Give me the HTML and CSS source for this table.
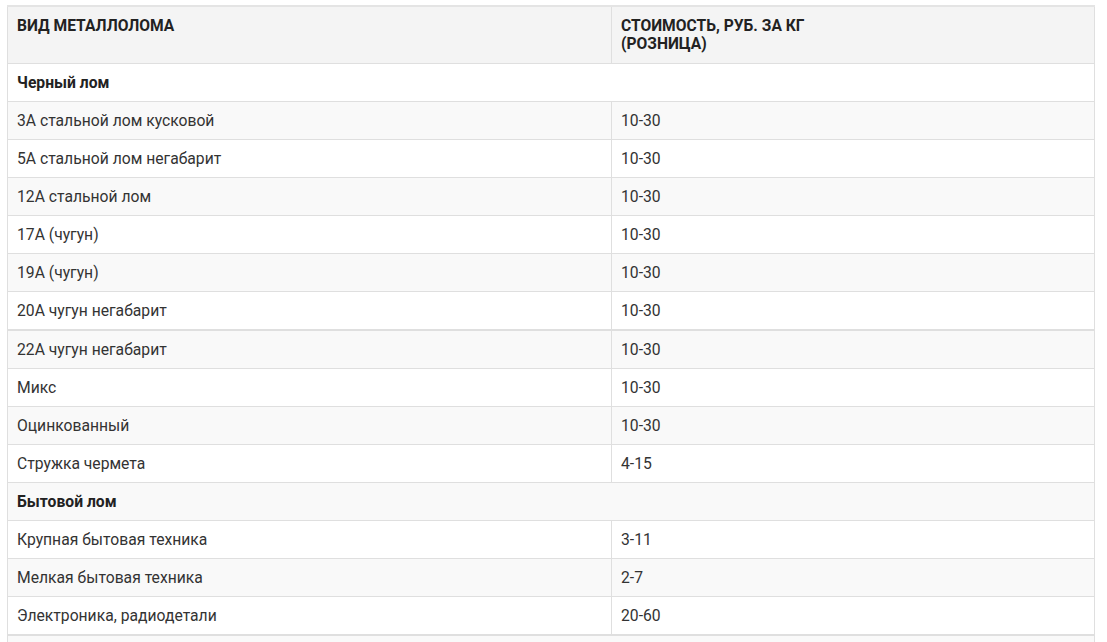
FILE: index.html
```html
<!DOCTYPE html>
<html lang="ru">
<head>
<meta charset="utf-8">
<title>Цены на металлолом</title>
<link rel="stylesheet" href="styles.css">
</head>
<body>
<div class="wrap">
<table class="price">
  <colgroup><col class="c1"><col class="c2"></colgroup>
  <thead>
    <tr><th>Вид металлолома</th><th>Стоимость, руб. за кг<br>(розница)</th></tr>
  </thead>
  <tbody>
    <tr class="group"><td colspan="2">Черный лом</td></tr>
    <tr class="alt"><td>3А стальной лом кусковой</td><td>10-30</td></tr>
    <tr><td>5А стальной лом негабарит</td><td>10-30</td></tr>
    <tr class="alt"><td>12А стальной лом</td><td>10-30</td></tr>
    <tr><td>17А (чугун)</td><td>10-30</td></tr>
    <tr class="alt"><td>19А (чугун)</td><td>10-30</td></tr>
    <tr><td>20А чугун негабарит</td><td>10-30</td></tr>
    <tr class="alt sep"><td>22А чугун негабарит</td><td>10-30</td></tr>
    <tr><td>Микс</td><td>10-30</td></tr>
    <tr class="alt"><td>Оцинкованный</td><td>10-30</td></tr>
    <tr><td>Стружка чермета</td><td>4-15</td></tr>
    <tr class="alt group"><td colspan="2">Бытовой лом</td></tr>
    <tr><td>Крупная бытовая техника</td><td>3-11</td></tr>
    <tr class="alt"><td>Мелкая бытовая техника</td><td>2-7</td></tr>
    <tr><td>Электроника, радиодетали</td><td>20-60</td></tr>
    <tr class="alt sep"><td colspan="2">&nbsp;</td></tr>
  </tbody>
</table>
</div>
</body>
</html>
```

FILE: styles.css
```css
html, body {
  margin: 0;
  padding: 0;
  background: #fff;
}
.wrap {
  padding: 5px 12px 0 7px;
}
.price {
  border-collapse: collapse;
  table-layout: fixed;
  width: 1088px;
  font-family: Roboto, "Liberation Sans", sans-serif;
  font-size: 15.7px;
  line-height: 18px;
  color: #333;
}
.price .c1 { width: 604px; }
.price th,
.price td {
  border: 1px solid #dfdfdf;
  text-align: left;
  vertical-align: top;
  padding: 10px 10px 9px 9px;
}
.price th {
  background: #f4f4f4;
  color: #222;
  font-weight: 700;
  font-size: 15.6px;
  line-height: 18px;
  text-transform: uppercase;
  border-top: 2px solid #e4e4e4;
  padding: 10px 10px 10px 9px;
  height: 36px;
}
.price td {
  height: 18px;
}
.price tr.alt td {
  background: #f9f9f9;
}
.price tr.group td {
  font-weight: 700;
  color: #222;
}
.price tr.sep td {
  border-top: 2px solid #dfdfdf;
}
```
